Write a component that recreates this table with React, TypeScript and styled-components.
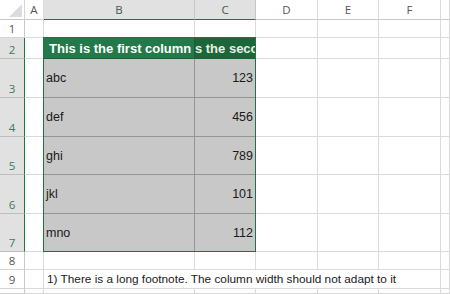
import React from 'react';
import styled, { createGlobalStyle, css } from 'styled-components';

const Global = createGlobalStyle`
  html, body { margin: 0; padding: 0; background: #fff; overflow: hidden; }
  * { box-sizing: border-box; }
`;

const GREEN = '#217346';

type Pos = { $r: number; $c: number; $span?: number };

const place = css<Pos>`
  grid-row: ${(p) => p.$r + 1};
  grid-column: ${(p) => `${p.$c + 1} / span ${p.$span ?? 1}`};
`;

const Sheet = styled.div`
  display: grid;
  grid-template-columns: 25px 19px 151px 61px 62px 61px 62px 1fr;
  grid-template-rows: 20px 18px 21px 39px 39px 38px 39px 38px 18px 19px 1fr;
  width: 450px;
  height: 294px;
  overflow: hidden;
  font-family: "Liberation Sans", Arial, sans-serif;
`;

const Corner = styled.div<Pos>`
  ${place}
  position: relative;
  border-right: 1px solid #d4d4d4;
  border-bottom: 1px solid #c8c8c8;
  &::after {
    content: '';
    position: absolute;
    right: 2px;
    bottom: 2px;
    width: 0;
    height: 0;
    border-style: solid;
    border-width: 0 0 13px 13px;
    border-color: transparent transparent #dcdcdc transparent;
  }
`;

const ColHeader = styled.div<Pos & { $sel?: boolean }>`
  ${place}
  display: flex;
  align-items: center;
  justify-content: center;
  font-family: "Open Sans", "Noto Sans", sans-serif;
  font-size: 11.5px;
  padding-bottom: 1px;
  color: ${(p) => (p.$sel ? '#3f5a49' : '#555')};
  background: ${(p) => (p.$sel ? '#e1e1e1' : '#fff')};
  border-right: 1px solid ${(p) => (p.$sel ? '#c6c6c6' : '#dadada')};
  border-bottom: 1px solid ${(p) => (p.$sel ? GREEN : '#c8c8c8')};
`;

const RowHeader = styled.div<Pos & { $sel?: boolean }>`
  ${place}
  display: flex;
  align-items: flex-end;
  justify-content: center;
  font-family: "Open Sans", "Noto Sans", sans-serif;
  font-size: 11.5px;
  line-height: 15px;
  padding-bottom: 1px;
  color: ${(p) => (p.$sel ? '#3e7a58' : '#555')};
  background: ${(p) => (p.$sel ? '#e1e1e1' : '#fff')};
  border-right: 1px solid ${(p) => (p.$sel ? GREEN : '#c8c8c8')};
  border-bottom: 1px solid ${(p) => (p.$sel ? '#bdbdbd' : '#d4d4d4')};
`;

type Variant = 'plain' | 'shaded' | 'active' | 'activeShaded' | 'footnote';

const variants: Record<Variant, ReturnType<typeof css>> = {
  plain: css`
    border-right: 1px solid #dadada;
    border-bottom: 1px solid #dadada;
  `,
  shaded: css`
    background: #c8c8c8;
    border-right: 1px solid #959595;
    border-bottom: 1px solid #959595;
  `,
  active: css`
    background: #23794a;
    color: #fff;
    font-weight: bold;
    font-size: 13px;
    border-right: 1px solid #1b5f36;
    border-bottom: 1px solid #1b5f36;
  `,
  activeShaded: css`
    background: #1c6639;
    color: #e8efe9;
    font-weight: bold;
    font-size: 13px;
    border-right: 1px solid #1b5f36;
    border-bottom: 1px solid #1b5f36;
  `,
  footnote: css`
    overflow: visible;
    font-size: 11.8px;
    padding-left: 3px;
    border-right: 1px solid #dadada;
    border-bottom: 1px solid #dadada;
  `,
};

const Cell = styled.div<Pos & { $v?: Variant; $right?: boolean }>`
  ${place}
  display: flex;
  align-items: center;
  justify-content: ${(p) => (p.$right ? 'flex-end' : 'flex-start')};
  padding: 0 2px;
  font-size: 12.5px;
  color: #1a1a1a;
  white-space: nowrap;
  overflow: hidden;
  ${(p) => variants[p.$v ?? 'plain']}
`;

const HeadText = styled.span<{ $shift?: number }>`
  padding-left: 3px;
  margin-left: ${(p) => p.$shift ?? 0}px;
`;

const SelectionFrame = styled.div`
  grid-column: 3 / 5;
  grid-row: 3 / 9;
  margin: -1px 0 0 -1px;
  border: 1px solid ${GREEN};
  pointer-events: none;
`;

const COL_LETTERS = ['A', 'B', 'C', 'D', 'E', 'F', 'G'];
const DATA: [string, string][] = [
  ['abc', '123'],
  ['def', '456'],
  ['ghi', '789'],
  ['jkl', '101'],
  ['mno', '112'],
];

export default function App() {
  const cells: React.ReactNode[] = [];

  cells.push(<Corner key="corner" $r={0} $c={0} />);
  COL_LETTERS.forEach((l, i) => {
    const sel = l === 'B' || l === 'C';
    cells.push(
      <ColHeader key={`h${l}`} $r={0} $c={i + 1} $sel={sel}>
        {i < 6 ? l : ''}
      </ColHeader>
    );
  });

  for (let r = 1; r <= 10; r++) {
    const selRow = r >= 2 && r <= 7;
    cells.push(
      <RowHeader key={`r${r}`} $r={r} $c={0} $sel={selRow}>
        {r <= 9 ? r : ''}
      </RowHeader>
    );
    cells.push(<Cell key={`A${r}`} $r={r} $c={1} />);
    if (r === 2) {
      cells.push(
        <Cell key="B2" $r={r} $c={2} $v="active">
          <HeadText>This is the first column</HeadText>
        </Cell>
      );
      cells.push(
        <Cell key="C2" $r={r} $c={3} $v="activeShaded">
          <HeadText $shift={-39}>This is the second column</HeadText>
        </Cell>
      );
    } else if (r >= 3 && r <= 7) {
      const [b, c] = DATA[r - 3];
      cells.push(
        <Cell key={`B${r}`} $r={r} $c={2} $v="shaded">
          {b}
        </Cell>
      );
      cells.push(
        <Cell key={`C${r}`} $r={r} $c={3} $v="shaded" $right>
          {c}
        </Cell>
      );
    } else if (r === 9) {
      cells.push(
        <Cell key="B9" $r={r} $c={2} $span={5} $v="footnote">
          1) There is a long footnote. The column width should not adapt to it
        </Cell>
      );
      cells.push(<Cell key="G9" $r={r} $c={7} />);
      continue;
    } else {
      cells.push(<Cell key={`B${r}`} $r={r} $c={2} />);
      cells.push(<Cell key={`C${r}`} $r={r} $c={3} />);
    }
    for (let c = 4; c <= 7; c++) {
      cells.push(<Cell key={`${COL_LETTERS[c - 1]}${r}`} $r={r} $c={c} />);
    }
  }

  return (
    <>
      <Global />
      <Sheet>
        {cells}
        <SelectionFrame />
      </Sheet>
    </>
  );
}
